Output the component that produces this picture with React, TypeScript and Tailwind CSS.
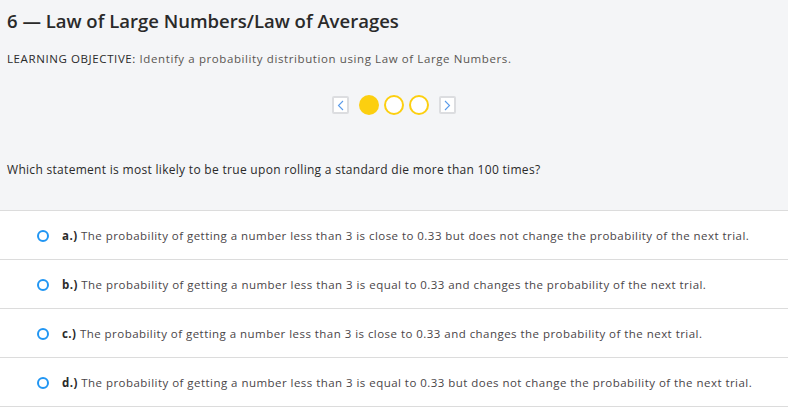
import React from 'react';

const options = [
    { key: 'a.)', text: 'The probability of getting a number less than 3 is close to 0.33 but does not change the probability of the next trial.' },
    { key: 'b.)', text: 'The probability of getting a number less than 3 is equal to 0.33 and changes the probability of the next trial.' },
    { key: 'c.)', text: 'The probability of getting a number less than 3 is close to 0.33 and changes the probability of the next trial.' },
    { key: 'd.)', text: 'The probability of getting a number less than 3 is equal to 0.33 but does not change the probability of the next trial.' },
];

const NavButton: React.FC<{ dir: 'left' | 'right' }> = ({ dir }) => (
    <div className="w-[17px] h-[18px] bg-white border-2 border-[#dcdde0] rounded-[2px] flex items-center justify-center">
        <svg width="7" height="11" viewBox="0 0 7 11" fill="none">
            <path
                d={dir === 'left' ? 'M6 1 L1.5 5.5 L6 10' : 'M1 1 L5.5 5.5 L1 10'}
                stroke="#5a9bea"
                strokeWidth="1.1"
            />
        </svg>
    </div>
);

export default function App() {
    return (
        <div className="w-[788px] h-[409px] bg-white font-['Open_Sans',sans-serif] overflow-hidden">
            {/* 头部 */}
            <div className="bg-[#f4f5f7] h-[211px] border-b border-[#dcdcdc] px-[7px] pt-[9px]">
                <h1 className="text-[18.5px] font-semibold text-[#2a2a2a] leading-[24px]">
                    6 — Law of Large Numbers/Law of Averages
                </h1>
                <p className="mt-[18px] text-[11.5px] tracking-[0.6px] leading-[16px] text-[#5a5552]">
                    <span className="text-[#2a2a2a]">LEARNING OBJECTIVE:</span> Identify a probability distribution using Law of Large Numbers.
                </p>
                <div className="mt-[28px] flex items-center justify-center gap-[6px]">
                    <NavButton dir="left" />
                    <div className="flex items-center gap-[5px] mx-[4px]">
                        <div className="w-[20px] h-[20px] rounded-full bg-[#fccf10]" />
                        <div className="w-[20px] h-[20px] rounded-full border-2 border-[#fccf10] bg-white" />
                        <div className="w-[20px] h-[20px] rounded-full border-2 border-[#fccf10] bg-white" />
                    </div>
                    <NavButton dir="right" />
                </div>
                <p className="mt-[47px] text-[12px] tracking-[0.3px] leading-[16px] text-[#2a2a2a]">
                    Which statement is most likely to be true upon rolling a standard die more than 100 times?
                </p>
            </div>

            {/* 选项 */}
            {options.map((o) => (
                <div key={o.key} className="h-[49px] border-b border-[#dcdcdc] flex items-center pl-[37px] pt-[2px]">
                    <div className="w-[12px] h-[12px] rounded-full border-2 border-[#2196f3] shrink-0" />
                    <p className="ml-[13px] text-[11.5px] tracking-[0.46px] text-[#4a4548]">
                        <span className="font-bold text-[#2a2a2a]">{o.key}</span> {o.text}
                    </p>
                </div>
            ))}
        </div>
    );
}
